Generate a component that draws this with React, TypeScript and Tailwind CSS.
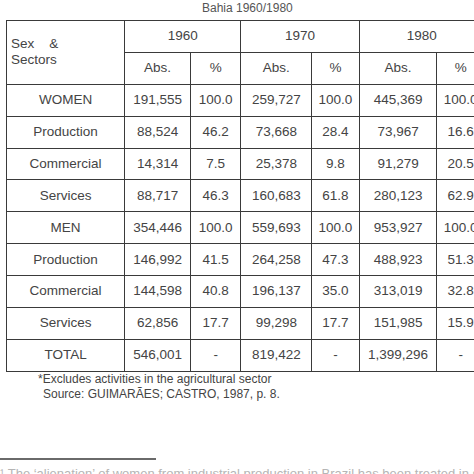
import React from 'react'

interface Row {
  label: string
  values: string[]
}

const rows: Row[] = [
  { label: 'WOMEN', values: ['191,555', '100.0', '259,727', '100.0', '445,369', '100.0'] },
  { label: 'Production', values: ['88,524', '46.2', '73,668', '28.4', '73,967', '16.6'] },
  { label: 'Commercial', values: ['14,314', '7.5', '25,378', '9.8', '91,279', '20.5'] },
  { label: 'Services', values: ['88,717', '46.3', '160,683', '61.8', '280,123', '62.9'] },
  { label: 'MEN', values: ['354,446', '100.0', '559,693', '100.0', '953,927', '100.0'] },
  { label: 'Production', values: ['146,992', '41.5', '264,258', '47.3', '488,923', '51.3'] },
  { label: 'Commercial', values: ['144,598', '40.8', '196,137', '35.0', '313,019', '32.8'] },
  { label: 'Services', values: ['62,856', '17.7', '99,298', '17.7', '151,985', '15.9'] },
  { label: 'TOTAL', values: ['546,001', '-', '819,422', '-', '1,399,296', '-'] },
]

const cell = 'border border-[#3a3a3a] text-center font-normal p-0'

export default function App() {
  return (
    <div
      className="w-[474px] h-[474px] overflow-hidden bg-white text-[#444]"
      style={{ fontFamily: '"Liberation Sans", Arial, sans-serif' }}
    >
      {/* Título */}
      <div className="h-[20px] pl-[202px] pt-[1px] text-[12px] leading-[14px] text-[#555]">Bahia 1960/1980</div>

      {/* Tabla */}
      <div className="pl-[6px] w-[490px]">
        <table className="border-collapse table-fixed text-[13.5px] w-[479px]">
          <colgroup>
            <col className="w-[117px]" />
            <col className="w-[65px]" />
            <col className="w-[50px]" />
            <col className="w-[70px]" />
            <col className="w-[47px]" />
            <col className="w-[77px]" />
            <col className="w-[47px]" />
          </colgroup>
          <thead>
            <tr className="h-[31.9px]">
              <th rowSpan={2} className={`${cell} text-left pl-[4px] leading-[16px]`}>
                <span className="whitespace-pre">Sex    &amp;</span>
                <br />
                Sectors
              </th>
              <th colSpan={2} className={cell}>1960</th>
              <th colSpan={2} className={cell}>1970</th>
              <th colSpan={2} className={cell}>1980</th>
            </tr>
            <tr className="h-[31.9px]">
              <th className={cell}>Abs.</th>
              <th className={cell}>%</th>
              <th className={cell}>Abs.</th>
              <th className={cell}>%</th>
              <th className={cell}>Abs.</th>
              <th className={cell}>%</th>
            </tr>
          </thead>
          <tbody>
            {rows.map((row, i) => (
              <tr key={i} className="h-[31.9px]">
                <td className={cell}>{row.label}</td>
                {row.values.map((v, j) => (
                  <td key={j} className={cell}>{v}</td>
                ))}
              </tr>
            ))}
          </tbody>
        </table>
      </div>

      {/* Notas */}
      <div className="pl-[38px] text-[12px] leading-[15px] text-[#444]">
        <div>*Excludes activities in the agricultural sector</div>
        <div className="pl-[5px]">Source: GUIMARÃES; CASTRO, 1987, p. 8.</div>
      </div>

      <div className="mt-[56px] w-[156px] h-[2px] bg-[#6a6a6a]" />
      <div className="mt-[6px] whitespace-nowrap text-[13px] leading-[16px] text-[#b5b5b5]">
        ¹ The ‘alienation’ of women from industrial production in Brazil has been treated in several works
      </div>
    </div>
  )
}
